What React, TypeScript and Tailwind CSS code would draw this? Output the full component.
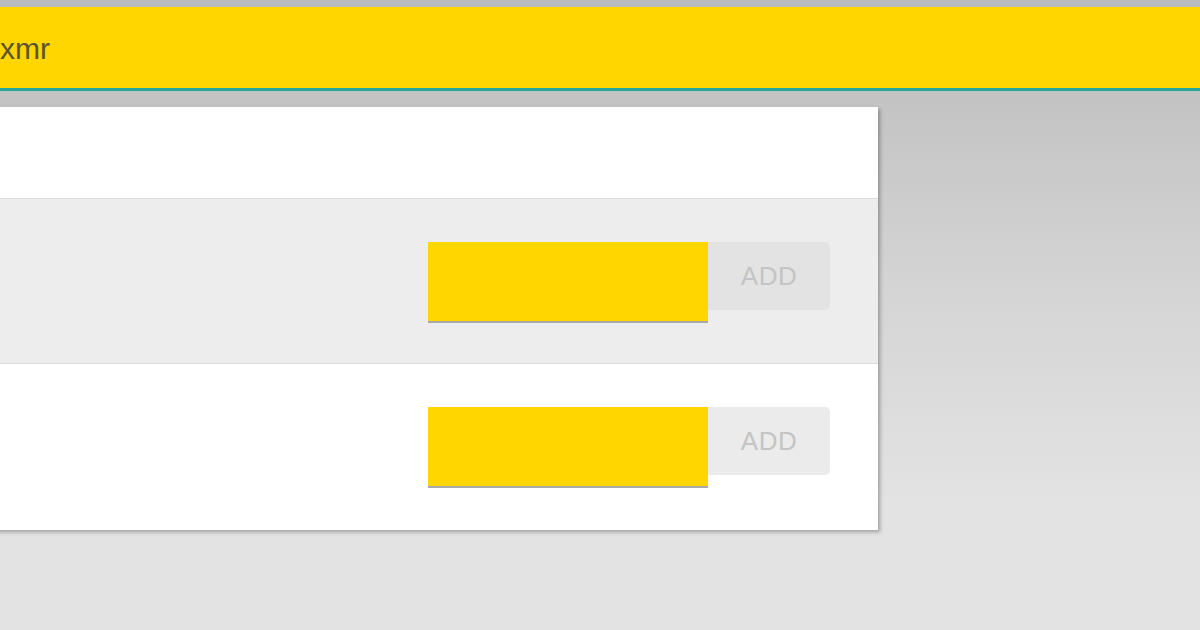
function AddRow({ shaded }: { shaded: boolean }) {
	return (
		<div
			className={`${
				shaded ? "bg-[#ededed] h-[165px] border-b border-[#dcdcdc]" : "bg-white h-[166px]"
			} flex items-start justify-end pt-[43px] pr-[48px]`}
		>
			<div className="flex items-start">
				<div className="w-[280px] h-[81px] bg-[#ffd600] border-b-2 border-[#a9a9a9]" />
				<button
					className={`${
						shaded ? "bg-[#e3e3e3]" : "bg-[#ebebeb]"
					} w-[122px] h-[68px] rounded-r-[5px] text-[26px] text-[#c4c4c4] font-['Liberation_Sans',sans-serif] tracking-[0.5px]`}
				>
					ADD
				</button>
			</div>
		</div>
	);
}

export default function App() {
	return (
		<div className="w-[1200px] h-[630px] overflow-hidden bg-[linear-gradient(180deg,#c3c3c3_15%,#d4d4d4_45%,#e3e3e3_80%)] font-['Liberation_Sans',sans-serif]">
			<div className="h-[7px] bg-[#b9babc]" />
			<div className="h-[84px] bg-[#ffd600] border-b-[3px] border-[#26a69a] flex items-center">
				<span className="text-[30px] text-[#5a5530] mt-[1px]">xmr</span>
			</div>
			<div className="pt-[16px]">
				<div className="-ml-[20px] w-[898px] bg-white shadow-[2px_2px_4px_rgba(0,0,0,0.3)]">
					<div className="h-[92px] border-b border-[#dcdcdc]" />
					<AddRow shaded={true} />
					<AddRow shaded={false} />
				</div>
			</div>
		</div>
	);
}
